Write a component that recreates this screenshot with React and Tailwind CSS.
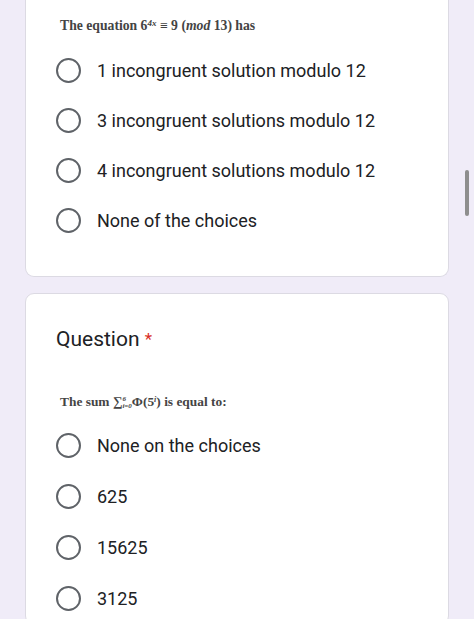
import React from "react";

const Radio = () => (
    <div className="w-[25px] h-[25px] shrink-0 rounded-full border-[2.5px] border-[#5f6368]" />
);

const Option = ({ label, tall }) => (
    <div className={`flex items-center gap-4 ${tall ? "h-[51px]" : "h-[50px]"}`}>
        <Radio />
        <span className="text-[18px] text-[#202124]" style={{ fontFamily: "Roboto, sans-serif" }}>
            {label}
        </span>
    </div>
);

const serif = { fontFamily: '"Liberation Serif", serif' };

export default function App() {
    const first = [
        "1 incongruent solution modulo 12",
        "3 incongruent solutions modulo 12",
        "4 incongruent solutions modulo 12",
        "None of the choices",
    ];
    const second = ["None on the choices", "625", "15625", "3125"];
    return (
        <div className="relative w-[474px] h-[619px] overflow-hidden bg-[#f0ecf8] px-[25px] flex flex-col gap-[16px]">
            {/* scrollbar */}
            <div className="absolute left-[465px] top-[170px] w-[4px] h-[46px] rounded-full bg-[#8e8e8e]" />

            <div className="shrink-0 bg-white border border-t-0 border-[#dcdae3] rounded-b-[9px] pl-[30px] pt-[16px] pb-[31px]">
                <p className="ml-[4px] h-[20px] text-[13.7px] leading-[20px] font-bold text-[#444]" style={serif}>
                    The equation 6<sup className="text-[9px] italic">4x</sup> ≡ 9 (<i>mod</i> 13) has
                </p>
                <div className="mt-[9px] flex flex-col">
                    {first.map((o) => (
                        <Option key={o} label={o} />
                    ))}
                </div>
            </div>

            <div className="shrink-0 bg-white border border-[#dcdae3] rounded-[9px] pl-[30px] pt-[31px]">
                <p className="h-[28px] leading-[28px] text-[21px] text-[#202124]" style={{ fontFamily: "Roboto, sans-serif" }}>
                    Question <span className="text-[#d93025] text-[17px] align-top">*</span>
                </p>
                <p className="ml-[4px] mt-[39px] h-[20px] text-[13.4px] leading-[20px] font-bold text-[#444]" style={serif}>
                    The sum ∑<span className="inline-flex flex-col text-[7px] leading-[7px] align-middle italic">
                        <span>6</span>
                        <span>i=0</span>
                    </span>Φ(5<sup className="text-[8px] italic">i</sup>) is equal to:
                </p>
                <div className="mt-[8px] flex flex-col">
                    {second.map((o) => (
                        <Option key={o} label={o} tall />
                    ))}
                </div>
            </div>
        </div>
    );
}
